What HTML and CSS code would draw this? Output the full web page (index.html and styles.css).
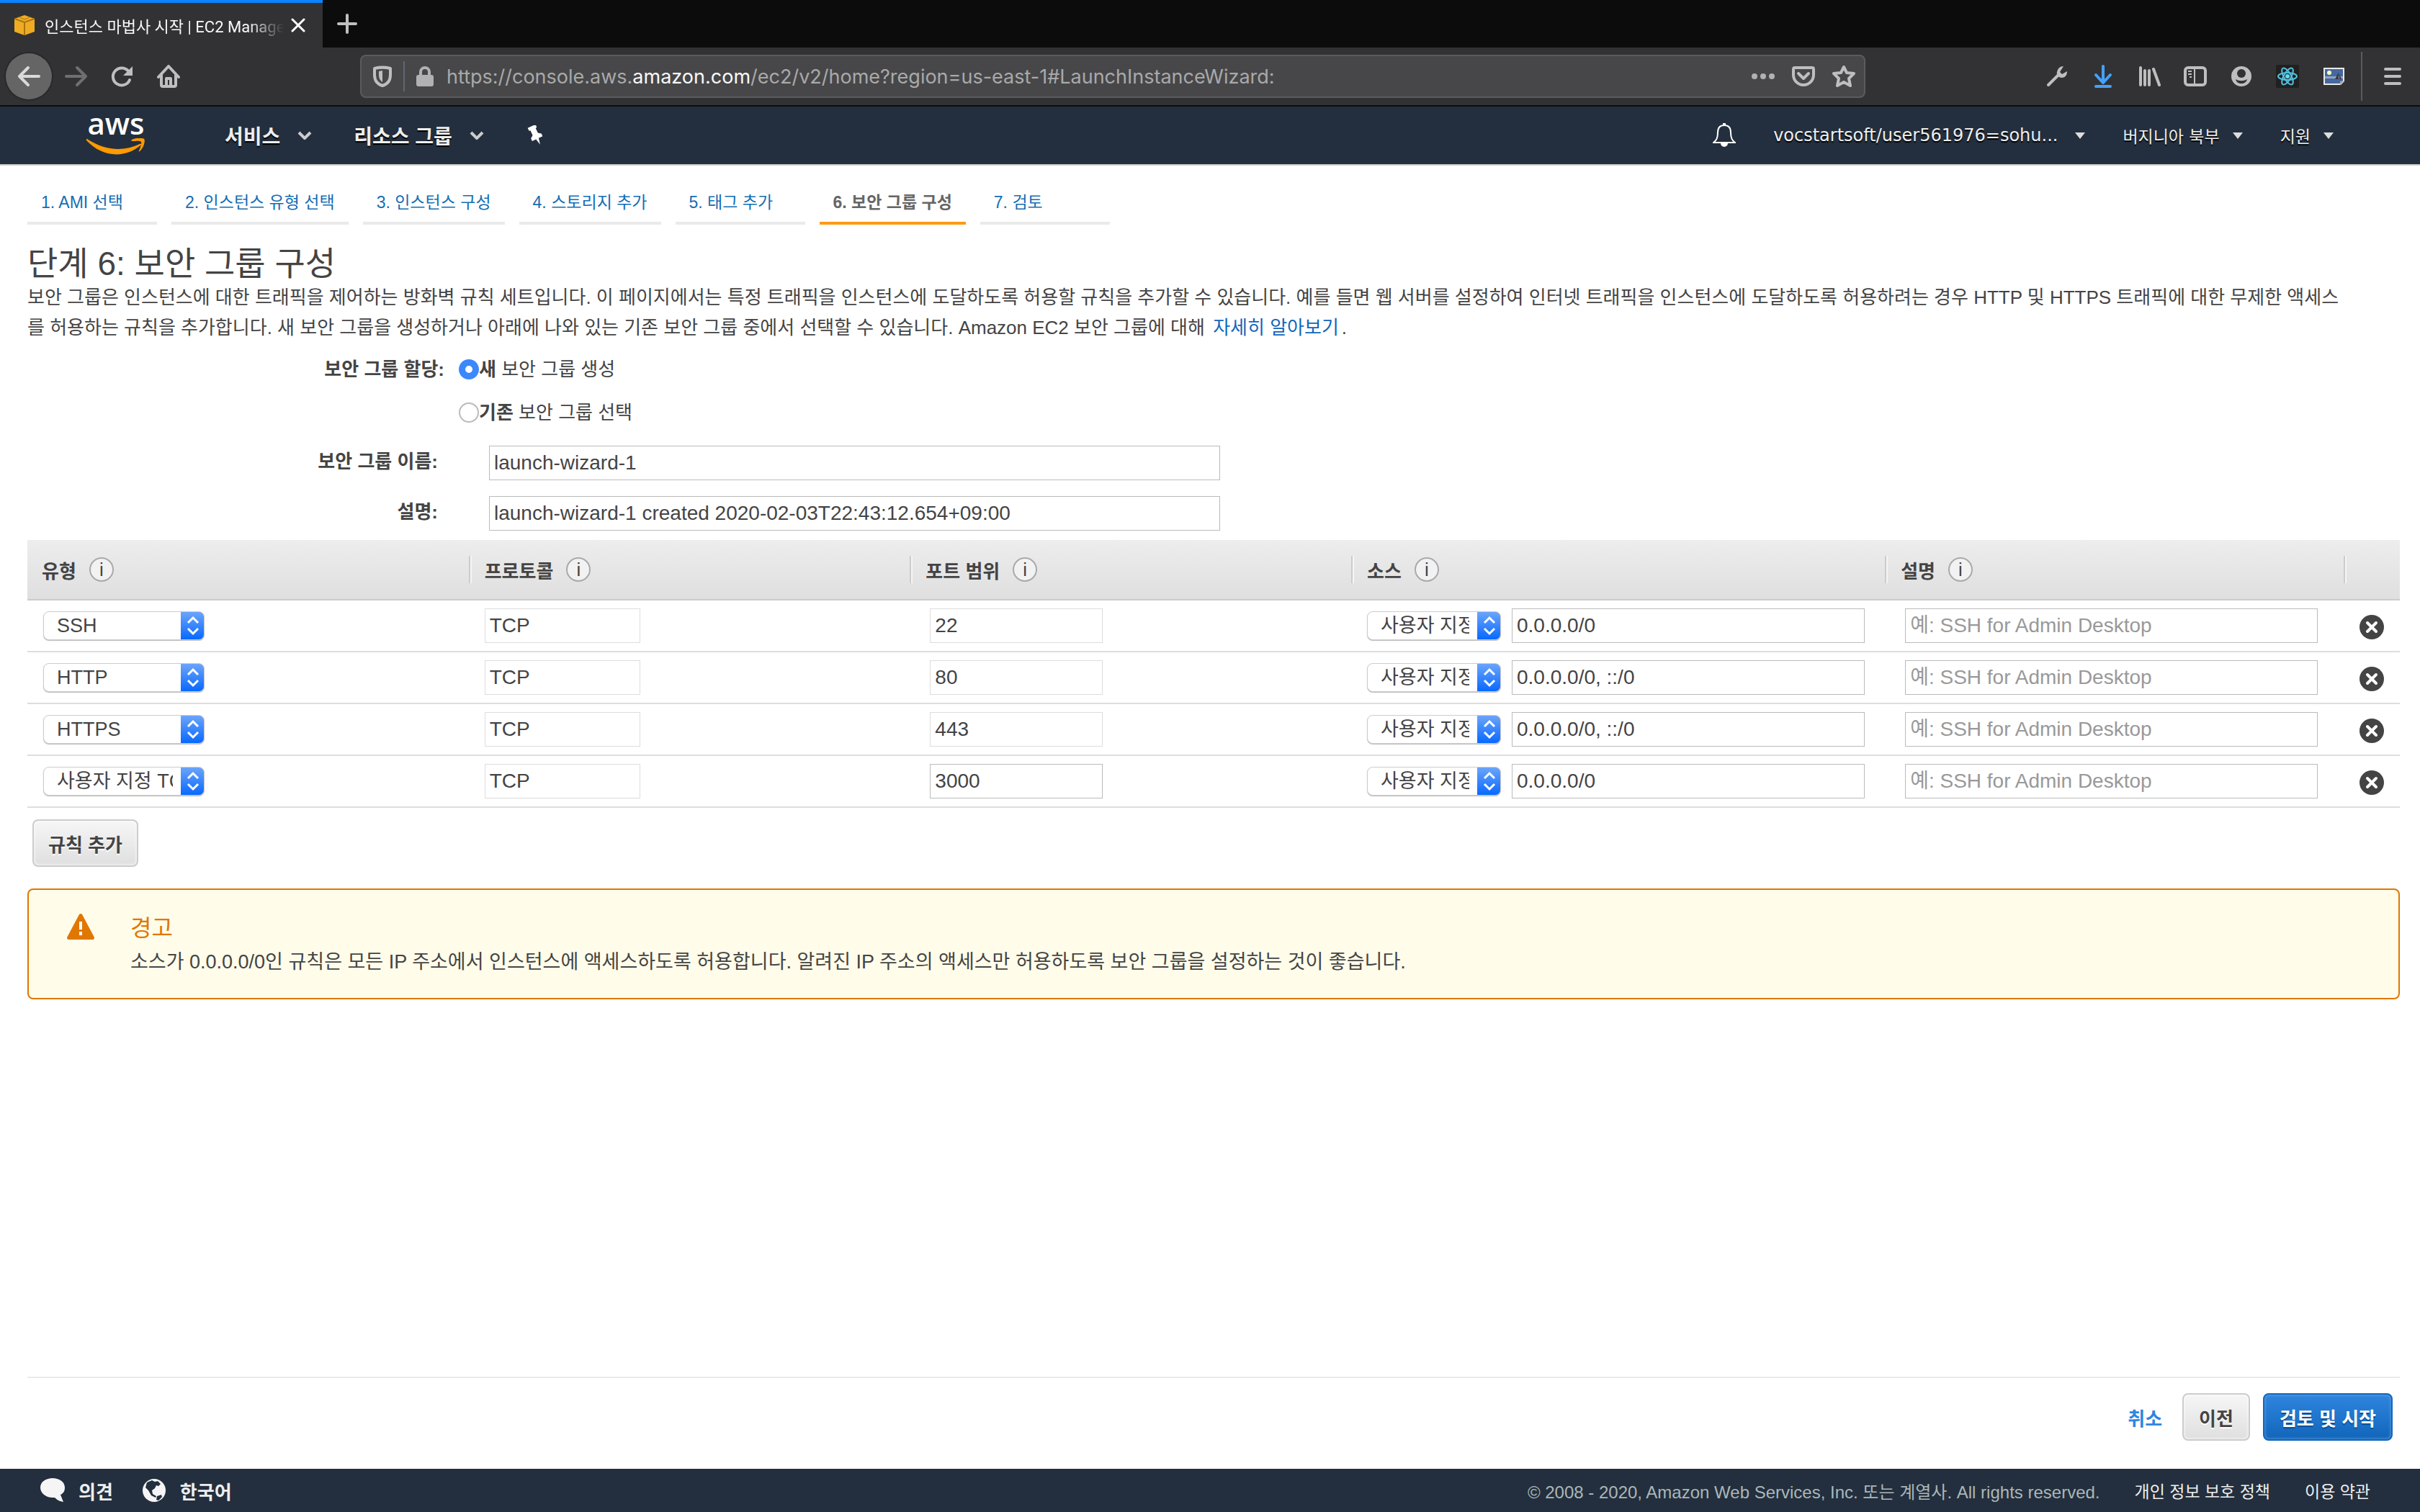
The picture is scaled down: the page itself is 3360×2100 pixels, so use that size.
FILE: index.html
```html
<!DOCTYPE html>
<html lang="ko">
<head>
    <meta charset="UTF-8">
    <meta name="viewport" content="width=device-width, initial-scale=1.0">
    <title>인스턴스 마법사 시작 | EC2 Management Console</title>
    <link rel="stylesheet" href="styles.css">
</head>
<body>
    <!-- Browser tabs -->
    <div class="tab-bar">
        <div class="tab">
            <svg class="favicon" viewBox="0 0 28 28">
                <path d="M0 5l14-5 14 5v18l-14 5-14-5z" fill="#efac23"/>
                <path d="M0 5l14 5 14-5M14 10v18" fill="none" stroke="#a87412" stroke-width="2"/>
                <path d="M7 3l7 3 7-3" fill="none" stroke="#a87412" stroke-width="1"/>
            </svg>
            <span class="tab-title">인스턴스 마법사 시작 | EC2 Management Console</span>
            <button class="icon-btn tab-close" aria-label="탭 닫기">
                <svg width="20" height="20" viewBox="0 0 20 20"><path d="M2 2l16 16M18 2L2 18" stroke="#fff" stroke-width="3" stroke-linecap="round"/></svg>
            </button>
        </div>
        <button class="icon-btn new-tab" aria-label="새 탭">
            <svg width="28" height="28" viewBox="0 0 28 28"><path d="M14 2v24M2 14h24" stroke="#c0c0c1" stroke-width="4" stroke-linecap="round"/></svg>
        </button>
    </div>

    <!-- Browser toolbar -->
    <div class="toolbar">
        <div class="toolbar-nav">
            <button class="icon-btn back-btn" aria-label="뒤로">
                <svg width="32" height="32" viewBox="0 0 32 32"><path d="M30 16H3M15 4L3 16l12 12" class="line light"/></svg>
            </button>
            <button class="icon-btn" aria-label="앞으로">
                <svg width="32" height="32" viewBox="0 0 32 32"><path d="M2 16h27M17 4l12 12-12 12" class="line dim"/></svg>
            </button>
            <button class="icon-btn" aria-label="새로 고침">
                <svg width="32" height="32" viewBox="0 0 32 32"><path d="M26 21a12 12 0 1 1-1-11" class="line"/><path d="M30 2v13H17z" fill="#bebebf"/></svg>
            </button>
            <button class="icon-btn" aria-label="홈">
                <svg width="32" height="32" viewBox="0 0 32 32"><path d="M2 17L16 2l14 15M6 14v14a2 2 0 0 0 2 2h16a2 2 0 0 0 2-2V14M13 30V19h6v11" class="line"/></svg>
            </button>
        </div>

        <div class="url-bar">
            <svg width="26" height="30" viewBox="0 0 26 30"><path d="M2 4c8-2 14-2 22 0v9c0 8-4 13-11 15C6 26 2 21 2 13z" class="line"/><path d="M13 7v16c-3-2-5-5-5-10V8z" fill="#bebebf"/></svg>
            <span class="url-divider"></span>
            <svg width="24" height="28" viewBox="0 0 24 28"><rect y="12" width="24" height="16" rx="3" fill="#b1b1b3"/><path d="M6 13V8a6 6 0 0 1 12 0v5" fill="none" stroke="#b1b1b3" stroke-width="4"/></svg>
            <span class="url-text">https://console.aws.<b>amazon.com</b>/ec2/v2/home?region=us-east-1#LaunchInstanceWizard:</span>
            <svg width="32" height="32" viewBox="0 0 32 32"><g fill="#b1b1b3"><circle cx="4" cy="16" r="4"/><circle cx="16" cy="16" r="4"/><circle cx="28" cy="16" r="4"/></g></svg>
            <svg width="32" height="32" viewBox="0 0 32 32"><path d="M4 4h24a2 2 0 0 1 2 2v8a14 14 0 0 1-28 0V6a2 2 0 0 1 2-2zM9 12l7 7 7-7" class="line"/></svg>
            <svg width="32" height="32" viewBox="0 0 32 32"><path d="M16 3l4 8 10 1-7 7 2 10-9-5-9 5 2-10-7-7 10-1z" class="line"/></svg>
        </div>

        <div class="toolbar-tools">
            <svg viewBox="0 0 32 32"><path d="M4 28L19 13" class="line"/><path d="M25 2l-5 8 3 3 7-4c0 6-3 9-8 9-5-1-7-4-6-8 1-5 4-8 9-8z" fill="#bebebf"/></svg>
            <svg viewBox="0 0 32 32"><path d="M16 2v22M6 14l10 11 10-11M6 30h20" fill="none" stroke="#45a1ff" stroke-width="4" stroke-linecap="round" stroke-linejoin="round"/></svg>
            <svg viewBox="0 0 32 32"><path d="M4 4v24M10 8v20M16 8v20M22 6l8 22" class="line"/></svg>
            <svg viewBox="0 0 32 32"><rect x="2" y="4" width="28" height="24" rx="4" class="line"/><path d="M15 4v24M6 9h5M6 13h5M8 17h3" fill="none" stroke="#bebebf" stroke-width="2"/></svg>
            <svg viewBox="0 0 32 32"><circle cx="16" cy="16" r="14" fill="#bebebf"/><circle cx="16" cy="12" r="6" fill="#323234"/><path d="M8 20c5 3 11 3 16 0-1 4-4 6-8 6s-7-2-8-6z" fill="#323234"/></svg>
            <svg viewBox="0 0 32 32"><rect width="32" height="32" rx="2" fill="#202020"/><g fill="none" stroke="#53c1de" stroke-width="2"><ellipse cx="16" cy="16" rx="13" ry="5"/><ellipse cx="16" cy="16" rx="13" ry="5" transform="rotate(60 16 16)"/><ellipse cx="16" cy="16" rx="13" ry="5" transform="rotate(120 16 16)"/></g><circle cx="16" cy="16" r="3" fill="#61dafb"/></svg>
            <svg viewBox="0 0 32 32"><path d="M2 4h29v19l-5 5H2z" fill="#e9e9e9"/><path d="M4 6h25v16l-4 4H4z" fill="#46689f"/><path d="M4 16h25v3H4z" fill="#90a3c4"/><circle cx="10" cy="11" r="3" fill="#fffbc0"/><path d="M23 10v10h-5zM24 12v8h3z" fill="#3b3b45"/><path d="M31 22l-6 6v-5z" fill="#aaa"/></svg>
        </div>
        <button class="icon-btn menu-btn" aria-label="메뉴">
            <svg width="24" height="24" viewBox="0 0 24 24"><path d="M2 2h20M2 12h20M2 22h20" class="line"/></svg>
        </button>
    </div>

    <!-- AWS header -->
    <header class="header">
        <a href="#" class="logo">
            <span>aws</span>
            <svg width="82" height="28" viewBox="0 0 82 28"><path d="M1 1c24 16 50 18 73 7 2-1 3 1 1 2C54 28 22 27 0 3c-1-1 0-3 1-2z" fill="#f90"/><path d="M63 2c6-3 15-3 17-1s0 12-6 17c-1 1-2 0-1-1 2-4 4-10 3-12s-8-1-12-1c-2 0-2-1-1-2z" fill="#f90"/></svg>
        </a>
        <nav class="nav-main">
            <a href="#">서비스 <svg width="20" height="12" viewBox="0 0 20 12"><path d="M2 2l8 8 8-8" class="chevron"/></svg></a>
            <a href="#">리소스 그룹 <svg width="20" height="12" viewBox="0 0 20 12"><path d="M2 2l8 8 8-8" class="chevron"/></svg></a>
            <a href="#" aria-label="고정"><svg width="28" height="28" viewBox="0 0 28 28"><path d="M8 0h12v4l-2 1v7l4 3v4h-6l-2 9-2-9H6v-4l4-3V5L8 4z" fill="#fff" transform="rotate(-25 14 14)"/></svg></a>
        </nav>
        <nav class="nav-user">
            <a href="#" aria-label="알림"><svg width="32" height="34" viewBox="0 0 32 34"><path d="M16 3c-6 0-9 4-9 10 0 8-2 11-6 14h30c-4-3-6-6-6-14 0-6-3-10-9-10z" fill="none" stroke="#fff" stroke-width="2"/><path d="M11 28h10a5 5 0 0 1-10 0zM14 0h4v3h-4z" fill="#fff"/></svg></a>
            <a href="#" class="account">vocstartsoft/user561976=sohu... <i class="caret"></i></a>
            <a href="#">버지니아 북부 <i class="caret"></i></a>
            <a href="#">지원 <i class="caret"></i></a>
        </nav>
    </header>

    <main class="content">
        <!-- Wizard steps -->
        <nav class="steps">
            <a href="#">1. AMI 선택</a>
            <a href="#">2. 인스턴스 유형 선택</a>
            <a href="#">3. 인스턴스 구성</a>
            <a href="#">4. 스토리지 추가</a>
            <a href="#">5. 태그 추가</a>
            <a href="#" class="active">6. 보안 그룹 구성</a>
            <a href="#">7. 검토</a>
        </nav>

        <h1>단계 6: 보안 그룹 구성</h1>
        <p class="intro">보안 그룹은 인스턴스에 대한 트래픽을 제어하는 방화벽 규칙 세트입니다. 이 페이지에서는 특정 트래픽을 인스턴스에 도달하도록 허용할 규칙을 추가할 수 있습니다. 예를 들면 웹 서버를 설정하여 인터넷 트래픽을 인스턴스에 도달하도록 허용하려는 경우 HTTP 및 HTTPS 트래픽에 대한 무제한 액세스를 허용하는 규칙을 추가합니다. 새 보안 그룹을 생성하거나 아래에 나와 있는 기존 보안 그룹 중에서 선택할 수 있습니다. Amazon EC2 보안 그룹에 대해 <a href="#">자세히 알아보기</a>.</p>

        <!-- Security group form -->
        <div class="assign">
            <span class="assign-label" id="assignLabel">보안 그룹 할당:</span>
            <div class="assign-options" role="radiogroup" aria-labelledby="assignLabel">
                <label><input type="radio" name="assign" checked><span><b>새</b> 보안 그룹 생성</span></label>
                <label><input type="radio" name="assign"><span><b>기존</b> 보안 그룹 선택</span></label>
            </div>
        </div>
        <div class="fields">
            <div class="field">
                <label for="groupName">보안 그룹 이름:</label>
                <input type="text" id="groupName" value="launch-wizard-1">
            </div>
            <div class="field">
                <label for="groupDesc">설명:</label>
                <input type="text" id="groupDesc" value="launch-wizard-1 created 2020-02-03T22:43:12.654+09:00">
            </div>
        </div>

        <!-- Rules -->
        <table class="rules">
            <colgroup>
                <col class="col-rule"><col class="col-rule"><col class="col-rule"><col class="col-source"><col><col class="col-remove">
            </colgroup>
            <thead>
                <tr>
                    <th><div>유형 <i class="info">i</i></div></th>
                    <th><div>프로토콜 <i class="info">i</i></div></th>
                    <th><div>포트 범위 <i class="info">i</i></div></th>
                    <th><div>소스 <i class="info">i</i></div></th>
                    <th><div>설명 <i class="info">i</i></div></th>
                    <th><div></div></th>
                </tr>
            </thead>
            <tbody>
                <tr>
                    <td><select class="type" aria-label="유형"><option>SSH</option></select></td>
                    <td><input type="text" class="protocol" value="TCP" aria-label="프로토콜" disabled></td>
                    <td class="wide"><input type="text" class="port" value="22" aria-label="포트 범위" disabled></td>
                    <td><div class="source"><select aria-label="소스 유형"><option>사용자 지정</option></select><input type="text" value="0.0.0.0/0" aria-label="소스"></div></td>
                    <td class="wide"><input type="text" class="desc" placeholder="예: SSH for Admin Desktop" aria-label="설명"></td>
                    <td><button class="icon-btn remove" aria-label="규칙 삭제"><svg width="34" height="34" viewBox="0 0 34 34"><circle cx="17" cy="17" r="17" fill="#444"/><path d="M11 11l12 12M23 11L11 23" stroke="#fff" stroke-width="4" stroke-linecap="round"/></svg></button></td>
                </tr>
                <tr>
                    <td><select class="type" aria-label="유형"><option>HTTP</option></select></td>
                    <td><input type="text" class="protocol" value="TCP" aria-label="프로토콜" disabled></td>
                    <td class="wide"><input type="text" class="port" value="80" aria-label="포트 범위" disabled></td>
                    <td><div class="source"><select aria-label="소스 유형"><option>사용자 지정</option></select><input type="text" value="0.0.0.0/0, ::/0" aria-label="소스"></div></td>
                    <td class="wide"><input type="text" class="desc" placeholder="예: SSH for Admin Desktop" aria-label="설명"></td>
                    <td><button class="icon-btn remove" aria-label="규칙 삭제"><svg width="34" height="34" viewBox="0 0 34 34"><circle cx="17" cy="17" r="17" fill="#444"/><path d="M11 11l12 12M23 11L11 23" stroke="#fff" stroke-width="4" stroke-linecap="round"/></svg></button></td>
                </tr>
                <tr>
                    <td><select class="type" aria-label="유형"><option>HTTPS</option></select></td>
                    <td><input type="text" class="protocol" value="TCP" aria-label="프로토콜" disabled></td>
                    <td class="wide"><input type="text" class="port" value="443" aria-label="포트 범위" disabled></td>
                    <td><div class="source"><select aria-label="소스 유형"><option>사용자 지정</option></select><input type="text" value="0.0.0.0/0, ::/0" aria-label="소스"></div></td>
                    <td class="wide"><input type="text" class="desc" placeholder="예: SSH for Admin Desktop" aria-label="설명"></td>
                    <td><button class="icon-btn remove" aria-label="규칙 삭제"><svg width="34" height="34" viewBox="0 0 34 34"><circle cx="17" cy="17" r="17" fill="#444"/><path d="M11 11l12 12M23 11L11 23" stroke="#fff" stroke-width="4" stroke-linecap="round"/></svg></button></td>
                </tr>
                <tr>
                    <td><select class="type" aria-label="유형"><option>사용자 지정 TCP 규칙</option></select></td>
                    <td><input type="text" class="protocol" value="TCP" aria-label="프로토콜" disabled></td>
                    <td class="wide"><input type="text" class="port" value="3000" aria-label="포트 범위"></td>
                    <td><div class="source"><select aria-label="소스 유형"><option>사용자 지정</option></select><input type="text" value="0.0.0.0/0" aria-label="소스"></div></td>
                    <td class="wide"><input type="text" class="desc" placeholder="예: SSH for Admin Desktop" aria-label="설명"></td>
                    <td><button class="icon-btn remove" aria-label="규칙 삭제"><svg width="34" height="34" viewBox="0 0 34 34"><circle cx="17" cy="17" r="17" fill="#444"/><path d="M11 11l12 12M23 11L11 23" stroke="#fff" stroke-width="4" stroke-linecap="round"/></svg></button></td>
                </tr>
            </tbody>
        </table>
        <button class="btn add-rule">규칙 추가</button>

        <!-- Warning -->
        <div class="alert">
            <svg width="38" height="36" viewBox="0 0 38 36"><path d="M19 0c1 0 2 1 2 1l17 32c0 2-1 3-2 3H2c-1 0-2-1-2-3L17 1s1-1 2-1z" fill="#e07700"/><path d="M17 11h4v11h-4zM17 25h4v5h-4z" fill="#fff"/></svg>
            <div>
                <h2>경고</h2>
                <p>소스가 0.0.0.0/0인 규칙은 모든 IP 주소에서 인스턴스에 액세스하도록 허용합니다. 알려진 IP 주소의 액세스만 허용하도록 보안 그룹을 설정하는 것이 좋습니다.</p>
            </div>
        </div>

        <div class="actions">
            <a href="#">취소</a>
            <button class="btn">이전</button>
            <button class="btn btn-primary">검토 및 시작</button>
        </div>
    </main>

    <!-- Footer -->
    <footer class="footer">
        <div class="footer-left">
            <a href="#"><svg width="34" height="34" viewBox="0 0 34 34"><path d="M17 0c9 0 17 5 17 13 0 5-2 8-6 10l4 10c-6-1-9-3-12-6C8 28 0 21 0 13 0 5 8 0 17 0z" fill="#f5f5f5"/></svg>의견</a>
            <a href="#"><svg width="34" height="34" viewBox="0 0 34 34"><circle cx="17" cy="17" r="16" fill="#f5f5f5"/><path d="M7 6l7-3 4 2 4-1 4 4-3 3-3-1-2 4-4 3 1 5 5 3-1 2-6-3-4-7-4-4zM21 25l6-2 1 3-5 5-3-1z" fill="#232f3e"/></svg>한국어</a>
        </div>
        <div class="footer-right">
            <span class="copyright">© 2008 - 2020, Amazon Web Services, Inc. 또는 계열사. All rights reserved.</span>
            <a href="#">개인 정보 보호 정책</a>
            <a href="#">이용 약관</a>
        </div>
    </footer>
</body>
</html>
```
FILE: styles.css
```css
:root {
    --navy: #232f3e;
    --text: #444;
    --link: #146eb4;
    --orange: #ff9a13;
    --warning: #e07700;
    --border: #bbb;
}

* {
    margin: 0;
    padding: 0;
    box-sizing: border-box;
}

body {
    min-height: 100vh;
    display: flex;
    flex-direction: column;
    font-family: 'Liberation Sans', 'Noto Sans CJK KR', sans-serif;
    font-size: 26px;
    color: var(--text);
    background-color: #fff;
}

a {
    color: var(--link);
    text-decoration: none;
}

input, select, button {
    font-family: inherit;
    font-size: 28px;
    color: var(--text);
}

svg {
    display: block;
    flex-shrink: 0;
}

.icon-btn {
    display: flex;
    align-items: center;
    justify-content: center;
    background: none;
    border: none;
    cursor: pointer;
}

.line {
    fill: none;
    stroke: #bebebf;
    stroke-width: 4;
    stroke-linecap: round;
    stroke-linejoin: round;
}

.line.light {
    stroke: #dadadb;
}

.line.dim {
    stroke: #6f6f70;
}

/* Browser chrome */
.tab-bar {
    display: flex;
    height: 66px;
    background-color: #0c0c0d;
}

.tab {
    display: flex;
    align-items: center;
    width: 448px;
    padding: 0 24px 0 20px;
    border-top: 4px solid #0a84ff;
    background-color: #323234;
}

.favicon {
    width: 28px;
    height: 28px;
}

.tab-title {
    flex: 1;
    margin: 0 10px 0 14px;
    overflow: hidden;
    white-space: nowrap;
    font-family: Roboto, 'Noto Sans CJK KR', sans-serif;
    font-size: 22px;
    color: #f9f9fa;
    -webkit-mask-image: linear-gradient(to right, #000 85%, transparent);
    mask-image: linear-gradient(to right, #000 85%, transparent);
}

.new-tab {
    width: 68px;
}

.toolbar {
    display: flex;
    align-items: center;
    height: 82px;
    padding: 0 26px 0 8px;
    background-color: #323234;
    border-bottom: 2px solid #0c0c0d;
}

.toolbar-nav {
    display: flex;
    align-items: center;
    gap: 32px;
    width: 492px;
}

.back-btn {
    width: 64px;
    height: 64px;
    margin-right: -14px;
    border-radius: 50%;
    background-color: #656566;
    box-shadow: 0 0 0 2px #29292b;
}

.url-bar {
    display: flex;
    align-items: center;
    gap: 24px;
    width: 2090px;
    height: 60px;
    padding: 0 12px 0 16px;
    background-color: #474749;
    border: 2px solid #5b5b5d;
    border-radius: 8px;
}

.url-divider {
    width: 2px;
    height: 42px;
    margin: 0 -8px;
    background-color: #5e6672;
}

.url-text {
    flex: 1;
    margin-left: -6px;
    font-family: Inter, sans-serif;
    font-size: 27px;
    color: #a9a9aa;
    white-space: nowrap;
}

.url-text b {
    font-weight: normal;
    color: #f9f9fa;
}

.toolbar-tools {
    flex: 1;
    display: flex;
    justify-content: flex-end;
    align-items: center;
    gap: 32px;
    height: 68px;
    padding-right: 22px;
    border-right: 2px solid #5b5b5d;
}

.toolbar-tools svg {
    width: 32px;
    height: 32px;
}

.menu-btn {
    margin-left: 30px;
}

/* AWS header */
.header {
    display: flex;
    align-items: center;
    height: 82px;
    padding: 0 120px;
    background-color: var(--navy);
    border-bottom: 2px solid #ccc;
    text-shadow: 0 2px 1px #000;
}

.header a {
    display: flex;
    align-items: center;
    color: #eee;
}

.header .logo {
    flex-direction: column;
    width: 82px;
    font-family: 'Open Sans', sans-serif;
    font-size: 42px;
    font-weight: 600;
    line-height: 30px;
    color: #fff;
    text-shadow: none;
}

.logo svg {
    margin-top: 6px;
}

.chevron {
    fill: none;
    stroke: #ccc;
    stroke-width: 4;
}

.nav-main {
    display: flex;
    gap: 58px;
    margin-left: 110px;
    font-size: 28px;
    font-weight: bold;
}

.nav-main a {
    gap: 24px;
}

.nav-user {
    display: flex;
    align-items: center;
    gap: 52px;
    margin-left: auto;
    font-family: 'DejaVu Sans', 'Noto Sans CJK KR', sans-serif;
    font-size: 23px;
}

.nav-user a {
    gap: 18px;
}

.nav-user .account {
    gap: 24px;
    font-size: 24px;
}

.caret {
    border: 7px solid transparent;
    border-top: 9px solid #ddd;
    border-bottom: 0;
}

/* Page */
.content {
    flex: 1;
    display: flex;
    flex-direction: column;
    align-items: stretch;
    padding: 32px 28px 0 38px;
}

.steps {
    display: flex;
    gap: 20px;
    font-size: 23px;
    line-height: 38px;
}

.steps a {
    min-width: 180px;
    padding: 0 19px 8px;
    border-bottom: 4px solid #eaeaea;
}

.steps .active {
    font-weight: bold;
    color: #666;
    border-color: var(--orange);
}

h1 {
    margin-top: 30px;
    font-size: 46px;
    font-weight: normal;
    line-height: 48px;
}

.intro {
    margin-top: 2px;
    padding-right: 72px;
    line-height: 42px;
}

.intro a {
    margin: 0 4px;
    color: #1166bb;
}

.assign {
    display: flex;
    gap: 20px;
    margin-top: 7px;
    line-height: 60px;
}

.assign-label {
    width: 579px;
    text-align: right;
    font-weight: bold;
}

.assign-options label {
    display: flex;
    align-items: center;
}

.assign-options input {
    appearance: none;
    width: 28px;
    height: 28px;
    border: 2px solid #bbb;
    border-radius: 50%;
    background-color: #fff;
}

.assign-options input:checked {
    border: 9px solid #3b88fd;
}

.fields {
    margin: 5px 0 2px;
}

.field {
    display: flex;
    align-items: center;
    gap: 71px;
    height: 70px;
}

.field label {
    width: 570px;
    padding-bottom: 10px;
    text-align: right;
    font-weight: bold;
}

input[type="text"] {
    height: 48px;
    padding: 0 6px;
    background-color: #fff;
    border: 1px solid var(--border);
    outline: none;
}

.field input[type="text"] {
    width: 1015px;
}

input[type="text"]:disabled {
    border-color: #ddd;
}

input::placeholder {
    color: #999;
}

.rules {
    width: 100%;
    table-layout: fixed;
    border-spacing: 0;
}

.col-rule {
    width: 18.6%;
}

.col-source {
    width: 22.5%;
}

.col-remove {
    width: 78px;
}

.rules th {
    height: 84px;
    text-align: left;
    background: linear-gradient(#ededed, #dfdfdf);
    border-bottom: 2px solid #ccc;
}

.rules th div {
    display: flex;
    align-items: center;
    gap: 18px;
    height: 38px;
    padding-left: 20px;
    border-left: 2px solid #ccc;
    box-shadow: inset 2px 0 0 #f5f5f5;
}

.rules th:first-child div {
    border: none;
    box-shadow: none;
}

.info {
    display: flex;
    align-items: center;
    justify-content: center;
    width: 34px;
    height: 34px;
    border: 2px solid #aaa;
    border-radius: 50%;
    background-color: #f2f2f2;
    font-size: 26px;
    font-style: normal;
    font-weight: normal;
}

.rules td {
    height: 72px;
    padding-left: 22px;
    border-bottom: 2px solid #ddd;
}

.rules .wide {
    padding-left: 28px;
}

.remove {
    margin-top: 4px;
}

select {
    appearance: none;
    height: 40px;
    padding: 0 43px 0 18px;
    border: 1px solid #ccc;
    border-radius: 8px;
    background: #fff url("data:image/svg+xml,%3Csvg xmlns='http://www.w3.org/2000/svg' width='33' height='40'%3E%3ClinearGradient id='g' x2='0' y2='1'%3E%3Cstop stop-color='%236ea6fa'/%3E%3Cstop offset='1' stop-color='%230567ff'/%3E%3C/linearGradient%3E%3Cpath d='M0 0h33v40H0z' fill='url(%23g)'/%3E%3Cpath d='M10 16l7-7 7 7M10 24l7 7 7-7' fill='none' stroke='%23fff' stroke-width='3'/%3E%3C/svg%3E") right center no-repeat;
    background-origin: border-box;
    box-shadow: 0 1px 1px #bbb;
}

.type {
    width: 224px;
}

.protocol {
    width: 216px;
}

.port {
    width: 240px;
}

.source {
    display: flex;
    align-items: center;
    gap: 15px;
    padding-right: 28px;
}

.source select {
    width: 186px;
}

.source input {
    flex: 1;
    min-width: 0;
}

.rules .desc {
    width: calc(100% - 36px);
}

.rules select {
    font-size: 27px;
}

.btn {
    height: 66px;
    padding: 0 20px;
    border: 2px solid #ccc;
    border-radius: 8px;
    background: linear-gradient(#f6f6f6, #dfdfdf);
    box-shadow: inset 0 0 4px #fff;
    font-size: 26px;
    font-weight: bold;
    text-shadow: 0 2px 0 #fff;
    cursor: pointer;
}

.btn-primary {
    background: linear-gradient(#2f85de, #1166bb);
    border-color: #1166bb;
    box-shadow: inset 0 0 4px #6aa9e6;
    color: #fff;
    text-shadow: 0 2px 1px #0d4d90;
}

.add-rule {
    align-self: flex-start;
    margin: 16px 0 0 7px;
}

.alert {
    display: flex;
    gap: 50px;
    margin-top: 30px;
    padding: 33px 53px 29px;
    border: 2px solid var(--warning);
    border-radius: 8px;
    background-color: #fffcea;
}

.alert h2 {
    font-size: 32px;
    font-weight: normal;
    line-height: 40px;
    color: var(--warning);
}

.alert p {
    margin-top: 6px;
    font-size: 27px;
    line-height: 42px;
}

.actions {
    display: flex;
    justify-content: flex-end;
    align-items: center;
    gap: 18px;
    height: 128px;
    margin-top: auto;
    padding: 0 10px 18px;
    border-top: 2px solid #eaeaea;
}

.actions .btn {
    padding: 0 21px;
}

.actions a {
    margin-right: 10px;
    font-weight: bold;
    color: #2e86de;
}

/* Footer */
.footer {
    display: flex;
    justify-content: space-between;
    align-items: center;
    height: 60px;
    padding: 0 69px 0 56px;
    background-color: var(--navy);
}

.footer-left, .footer-right {
    display: flex;
    align-items: center;
}

.footer a {
    display: flex;
    align-items: center;
    gap: 19px;
    color: #eee;
}

.footer-left {
    gap: 40px;
    font-weight: bold;
}

.footer-right {
    gap: 48px;
    font-size: 23px;
}

.copyright {
    font-size: 24px;
    color: #aab7b8;
}
```
